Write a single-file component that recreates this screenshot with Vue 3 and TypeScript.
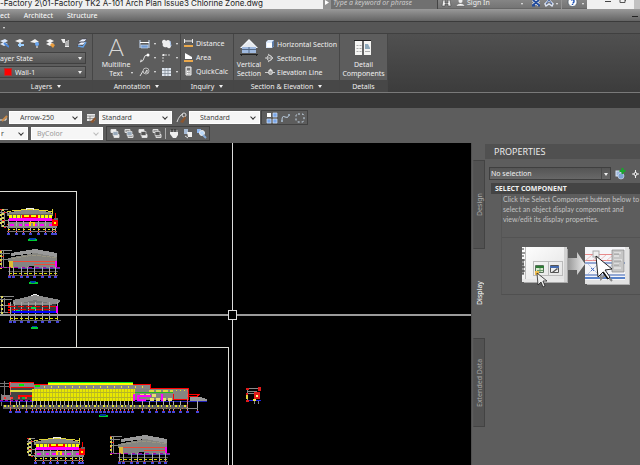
<script setup lang="ts">
import { ref } from 'vue'

interface Dot { x: number; y: number }

const layerState = ref('ayer State')
const layer = ref('Wall-1')
const leader = ref('Arrow-250')
const tableStyle = ref('Standard')
const mleaderStyle = ref('Standard')
const selection = ref('No selection')
const activeTab = ref('Display')

const menuTabs = ['ect', 'Architect', 'Structure']
const paletteTabs = ['Design', 'Display', 'Extended Data']

const footings: number[] = [8, 16, 23, 30, 38, 45, 52, 55]
const footingsWide: number[] = [9, 13, 21, 27, 34, 42, 49, 55]
const footingsLow: number[] = [10, 14, 21, 28, 35, 42, 49, 57]

const range = (from: number, to: number, step: number): number[] => {
  const out: number[] = []
  for (let v = from; v <= to; v += step) out.push(v)
  return out
}

const longFootings = [10, 16, 19, 26, ...range(32, 135, 4), 142, 149, 156, 163, 169, 173, 180, 187, 197]
const mullions = range(34, 134, 3)
const stripMarks = range(44, 148, 7)

const gableA: Dot[] = [{ x: 0, y: 0 }, { x: 27, y: 229 }]
const gableB: Dot[] = [{ x: 0, y: 0 }, { x: 110, y: 186 }]
</script>

<template>
  <div class="app">
    <header class="titlebar">
      <div class="doc-title">-Factory 2\01-Factory TK2 A-101 Arch Plan Issue3 Chlorine Zone.dwg</div>
      <div class="info">
        <button class="flat step" aria-label="Expand search"><svg width="8" height="9"><path d="M2 0L6 2.500L2 5z" fill="#fff" /></svg></button>
        <input class="search" type="text" aria-label="Search" placeholder="Type a keyword or phrase" />
        <button class="flat" aria-label="Find">
          <svg width="11" height="9"><path d="M2 0h2v3h3V0h2l1 6H7V4H4v2H1z" fill="#f2f2f2" stroke="#444" stroke-width=".6" /></svg>
        </button>
        <button class="flat sign">
          <svg width="11" height="9"><circle cx="5.500" cy="1" r="2" fill="#eee" /><path d="M1 6q1-2.500 4.500-2.500T10 6z" fill="#fff" stroke="#555" stroke-width=".5" /></svg>
          <span>Sign In</span>
          <i class="tri"></i>
        </button>
        <button class="flat" aria-label="Exchange">
          <svg width="10" height="9"><path d="M2 0l6 5M8 0L2 5" stroke="#e8ecf5" stroke-width="3" /><path d="M2 0l6 5M8 0L2 5M1 5.500h3m3 0h2" stroke="#234c9c" stroke-width="1.800" /></svg>
        </button>
        <button class="flat share" aria-label="Connect">
          <svg width="12" height="9"><path d="M6 0L2 4l1 2 3-2 3 2 1-2z" fill="none" stroke="#dde5f4" stroke-width="1.500" /><path d="M6 0L3 4m3-4l3 4" stroke="#4260a0" /></svg>
          <i class="tri"></i>
        </button>
        <button class="flat help" aria-label="Help">
          <svg width="11" height="9"><circle cx="5.500" cy="2" r="4.500" fill="#fff" stroke="#345" stroke-width=".6" /><path d="M4 0q3-1 3 1T5.500 3M5.500 4v1" fill="none" stroke="#1c50b4" stroke-width="1.400" /></svg>
          <i class="tri"></i>
        </button>
      </div>
      <div class="window-buttons">
        <button class="flat" aria-label="Minimize"><svg width="8" height="9"><path d="M1 1.500h6" stroke="#444" /></svg></button>
        <button class="flat" aria-label="Restore"><svg width="8" height="9"><path d="M1 0v2.500h5V0M6.500 0v1" fill="none" stroke="#555" /></svg></button>
        <button class="flat close" aria-label="Close"></button>
      </div>
    </header>

    <nav class="menu">
      <a v-for="t in menuTabs" :key="t" href="#">{{ t }}</a>
      <button class="flat collapse" aria-label="Minimize document"><svg width="6" height="12"><path d="M0 7.500h6" stroke="#222" stroke-width="1" /></svg></button>
    </nav>
    <div class="quick"><i class="tri"></i></div>

    <section class="ribbon">
      <div class="panel layers">
        <div class="panel-body">
          <div class="layer-icons">
            <svg width="9" height="10"><path d="M0 3l5-2 3 2-4 2zM0 6l4-2 4 2-4 2z" fill="#dce8fa" /><path d="M4 5l5 4" stroke="#4d8ade" stroke-width="2" /></svg>
            <svg width="10" height="10"><path d="M0 3l5-2 4 2-4 2z" fill="#eee" /><path d="M5 5v4M3 7h6" stroke="#9ccfff" stroke-width="2" /></svg>
            <svg width="10" height="10"><path d="M0 4l5-3 4 3-4 1z" fill="#eee" /><circle cx="7" cy="6" r="2" fill="#6daaf5" /><path d="M6 9h2" stroke="#fff" /></svg>
            <svg width="10" height="10"><path d="M0 3l4-2 4 2-4 2zM0 6l4-2 4 2-4 2z" fill="#f5f5f5" /><path d="M4 7l2-2 3 2-2 3z" fill="#e99c3c" /></svg>
            <svg width="10" height="10"><path d="M0 1h4v3l4-2v7H4V5H2z" fill="#eee" /><path d="M5 4v4M7 3v5" stroke="#777" /></svg>
            <svg width="11" height="10"><path d="M1 4l4-3h5L7 4zM0 7l4-3h5L6 7z" fill="#eef4ff" stroke="#334" stroke-width=".5" /><path d="M1 8l5 1 3-5" fill="none" stroke="#65a2e6" stroke-width="1.500" /></svg>
          </div>
          <span class="combo dark"><select v-model="layerState" aria-label="Layer state"><option>ayer State</option></select></span>
          <span class="combo dark swatch"><i></i><select v-model="layer" aria-label="Layer"><option>Wall-1</option></select></span>
        </div>
        <h2>Layers <i class="tri big"></i></h2>
      </div>

      <div class="panel annotation">
        <div class="panel-body row">
          <button class="flat large mtext"><span class="glyph">A</span><span>Multiline</span><span>Text</span><i class="tri"></i></button>
          <div class="annot-grid">
            <button class="flat" aria-label="Dimension"><svg width="12" height="10"><path d="M1 1v8M10 1v8" stroke="#c8dcf8" /><path d="M1 3.500h9" stroke="#fff" /><path d="M2 6h7v3H2z" fill="#739bd2" stroke="#cfe0f7" stroke-width=".6" /></svg><i class="tri"></i></button>
            <button class="flat" aria-label="Revision cloud"><svg width="12" height="10"><path d="M2 1q2-1 3 1 2-2 4 0 1 1 0 3 2 2 0 4-2 1-3-1-3 1-4-1Q1 6 2 5 0 3 2 1z" fill="#eee" /><path d="M9 2l1 5" stroke="#a9c6ed" /></svg><i class="tri"></i></button>
            <button class="flat" aria-label="Leader"><svg width="12" height="10"><path d="M1 9q4-1 4-4t4-3" fill="none" stroke="#ddd" /><path d="M1 9l1-3 1 2z" fill="#ddd" /><circle cx="9" cy="2" r="1.500" fill="#fff" /></svg><i class="tri"></i></button>
            <button class="flat" aria-label="Break"><svg width="12" height="10"><path d="M2 9V2h8" fill="none" stroke="#ccc" stroke-dasharray="2 1" /><path d="M1 2h3M2.500 1v2" stroke="#eee" /></svg><i class="tri"></i></button>
            <button class="flat" aria-label="Tag"><svg width="12" height="10"><circle cx="7" cy="4" r="3" fill="none" stroke="#bbb" /><path d="M1 9l3-5m2 2l2-3v3" fill="none" stroke="#ddd" /></svg><i class="tri"></i></button>
            <button class="flat" aria-label="Table"><svg width="12" height="10"><path d="M1 1h9v8H1z" fill="#dfe6ef" /><path d="M1 3.500h9M1 6.500h9M4 1v8M7 1v8" stroke="#78818c" stroke-width=".7" /></svg><i class="tri"></i></button>
          </div>
        </div>
        <h2>Annotation <i class="tri big"></i></h2>
      </div>

      <div class="panel inquiry">
        <div class="panel-body list">
          <button class="flat"><svg width="9" height="10"><path d="M0 3h9M.5 1v4M8.500 1v4" stroke="#eee" fill="none" /><path d="M0 8h9" stroke="#eaa84b" stroke-width="2" /></svg>Distance</button>
          <button class="flat"><svg width="9" height="10"><path d="M1 1l7 4v2H1z" fill="#fff" /><path d="M0 9h9" stroke="#eaa84b" stroke-width="2" /></svg>Area</button>
          <button class="flat"><svg width="9" height="10"><path d="M2 1h5v8H2z" fill="#aaa" stroke="#eee" /><path d="M3 3h3" stroke="#444" /><path d="M3 5.500h3M3 7.500h3" stroke="#fff" stroke-dasharray="1 .500" /></svg>QuickCalc</button>
        </div>
        <h2>Inquiry <i class="tri big"></i></h2>
      </div>

      <div class="panel section">
        <div class="panel-body row">
          <button class="flat large">
            <svg width="18" height="20"><path d="M0 11L9 2l9 9z" fill="#f4f7fa" /><path d="M2 10h14v6H2z" fill="#9fb9df" /><path d="M2 10L9 4l7 6z" fill="#e5e9ee" /><path d="M9 10v6M2 12.500h14" stroke="#536986" /><path d="M0 17.500h18M1.500 17v2m15-2v2" stroke="#222" /></svg>
            <span>Vertical</span><span>Section</span>
          </button>
          <div class="list">
            <button class="flat"><svg width="10" height="10"><path d="M1 3l2-2h6v6L7 9H1z" fill="#dce9fb" /><path d="M2 4h5v4H2z" fill="#fff" /><path d="M7 3l2-2v6L7 9z" fill="#5d7da9" /></svg>Horizontal Section</button>
            <button class="flat"><svg width="10" height="10"><circle cx="4.500" cy="5" r="2.500" fill="none" stroke="#ccc" /><path d="M0 5h6M3 1l5 4-5 4" fill="none" stroke="#ccc" /></svg>Section Line</button>
            <button class="flat"><svg width="10" height="10"><path d="M0 5.500h10" stroke="#ccc" /><circle cx="5.500" cy="5.500" r="2" fill="#aaa" stroke="#ddd" /><path d="M3 4l2.500-2.500L8 4z" fill="#ddd" /></svg>Elevation Line</button>
          </div>
        </div>
        <h2>Section &amp; Elevation <i class="tri big"></i></h2>
      </div>

      <div class="panel details">
        <div class="panel-body row">
          <button class="flat large">
            <svg width="18" height="20"><path d="M1 4h7.500v14H1zM9.500 4H17v14H9.500z" fill="#f5f5f3" /><path d="M0 3.500h17M9 4v14" stroke="#222" /><path d="M2.500 8.500h2m1 0h2m-5 3h2m1 0h2m-5 3h2m1 0h2m3.500 0h5" stroke="#999" stroke-width=".8" /><path d="M11 7h3l2 4v1h-5z" fill="#8fa9bb" /></svg>
            <span>Detail</span><span>Components</span>
          </button>
        </div>
        <h2>Details</h2>
      </div>
    </section>
    <div class="band"></div>

    <section class="toolbars">
      <div class="bar">
        <svg class="lead" width="9" height="12"><path d="M0 8h6V5" fill="none" stroke="#eee" /><path d="M2 9l5-5" stroke="#c98b4b" stroke-width="2" /></svg>
        <span class="combo light first"><select v-model="leader" aria-label="Dimension style"><option>Arrow-250</option></select></span>
        <svg width="12" height="12"><path d="M1 2h8v7H1z" fill="#e8e8e8" /><path d="M1 4h8M4 4v5M1 6.500h8" stroke="#666" stroke-width=".6" /><path d="M4 10l5-5 1 2-3 4z" fill="#8b5630" /></svg>
        <span class="combo light"><select v-model="tableStyle" aria-label="Table style"><option>Standard</option></select></span>
        <svg width="12" height="12"><path d="M1 10q1-4 4-7l2-1" fill="none" stroke="#ddd" /><circle cx="8" cy="3" r="2" fill="none" stroke="#ddd" /><path d="M4 10l5-6 1 2-3 5z" fill="#8b5630" /></svg>
        <span class="combo light inset"><select v-model="mleaderStyle" aria-label="Multileader style"><option>Standard</option></select></span>
        <div class="group">
          <button class="flat" aria-label="Blocks"><svg width="12" height="12"><path d="M1 1h4v4H1z" fill="#fff" /><path d="M7 1h4v4H7zM1 7h4v4H1zM7 7h4v4H7z" fill="#7aa7ea" stroke="#cfe1fb" stroke-width=".7" /></svg></button>
          <button class="flat" aria-label="Spline"><svg width="12" height="12"><path d="M2 8q0-5 3-3t4-2" fill="none" stroke="#bcd" /><path d="M1 8h2v2H1zM8 2h2v2H8z" fill="#9ab" /></svg></button>
          <button class="flat" aria-label="Boundary"><svg width="12" height="12"><rect x="2" y="2" width="8" height="8" rx="2" fill="none" stroke="#cde" stroke-dasharray="2 2" /></svg></button>
        </div>
      </div>
      <div class="bar">
        <span class="combo light tiny"><select aria-label="Line color"><option>r</option></select></span>
        <span class="combo light color"><select aria-label="Plot style" disabled><option>ByColor</option></select></span>
        <div class="group order">
          <button v-for="n in 4" :key="n" class="flat" aria-label="Draw order">
            <svg width="10" height="11"><path d="M1 1.500h5v3H1zM4 6.500h5v3H4z" :fill="n % 2 ? '#eee' : '#999'" stroke="#ddd" /><path d="M3 3.500h5v4H3z" :fill="n > 2 ? '#555' : '#9ab'" stroke="#eee" stroke-width=".6" /></svg>
          </button>
          <i class="sep"></i>
          <button class="flat" aria-label="Hatch to back"><svg width="10" height="11"><path d="M1 2h8v5l-2 3H4L1 6z" fill="#eee" /><path d="M1 3h8M3 1v3M6 1v3" stroke="#222" /></svg></button>
          <button class="flat" aria-label="Annotations to front"><svg width="10" height="11"><path d="M1 1h4v5H1z" fill="#a8bbd4" /><path d="M4 4h5v5H5z" fill="#f0f0f0" /><path d="M2 8l3 2" stroke="#ddd" /></svg></button>
          <button class="flat" aria-label="Isolate"><svg width="10" height="11"><path d="M0 1h4v4H0z" fill="#8eb6ee" /><circle cx="5" cy="5" r="2.500" fill="#bcd9fa" stroke="#eee" /><path d="M6 7l3 3" stroke="#87acd8" stroke-width="2" /></svg></button>
        </div>
      </div>
    </section>

    <main class="workspace">
      <div class="canvas">
        <svg width="100%" height="100%" shape-rendering="crispEdges" aria-label="Drawing area">
          <g transform="translate(0 -143)">
            <path d="M0 191.500h76.500V347M0 347.500h228.500V600" fill="none" stroke="#deded8" />

            <g v-for="(p, i) in gableA" :key="'a' + i" :transform="`translate(${p.x} ${p.y})`">
              <path d="M0 209.500h8M0 212.500h8M0 220.500h9M1 226.500h8M1.500 210v17M4.500 211v14" stroke="#888" fill="none" />
              <path d="M3 209v19M1 214v12" stroke="#dcd75e" stroke-width="2" stroke-dasharray="2 2" />
              <path d="M0 209.500h2m2 3h2m-4 8h3m2 4h2m-5 3h2" stroke="#e22" />
              <path d="M7 213L30 208l23 5v3H7z" fill="#8a8a86" />
              <path d="M7 211.500L30 209 53 211.500M52.500 209v5" fill="none" stroke="#dfd63a" />
              <path d="M26.500 210v-1.500h7v1.500" fill="none" stroke="#eee" />
              <path d="M9 214h43v4H9z" fill="#665" />
              <path d="M9 216.500h43" stroke="#ff0" stroke-width="3" stroke-dasharray="3 1" />
              <path d="M22 215h16v3H22z" fill="#f00" /><path d="M24 215h5v2h-5zM31 215h5v2h-5z" fill="#ff0" />
              <path d="M9 222h43v4H9z" fill="#85858a" />
              <path v-for="x in footings" :key="x" :d="`M${x + .5} 219v14`" stroke="#aaa" />
              <path d="M9 218h43v3H9z" fill="#f0f" />
              <path d="M10 225h42" stroke="#f0f" stroke-dasharray="4 5 3 3" stroke-width="2" />
              <path d="M29 222h6v4h-6z" fill="#ffd000" /><path d="M31 223h2v3h-2z" fill="#888" />
              <path d="M7 226h50v2H7z" fill="#888" />
              <path d="M52 219h3v-6h1v7h2v6h-6z" fill="#f00" /><path d="M54 222h2v2h-2z" fill="#ff0" /><path d="M54 218h4v2h-4z" fill="#666" />
              <path d="M8 229.500h48" stroke="#ee0" stroke-dasharray="2 3" /><path d="M7 231.500h50" stroke="#777" />
              <path v-for="x in footings" :key="x" :d="`M${x} 231.500h1`" stroke="#f00" />
              <path v-for="x in footings" :key="x" :d="`M${x - 1} 233h3v2h-3z`" fill="#4646d8" />
              <path d="M28 239h9v2h-9z" fill="#0c3" /><path d="M29 238h7v1h-7zM30 239h5v1h-5z" fill="#04a" />
            </g>

            <g v-for="(p, i) in gableB" :key="'b' + i" :transform="`translate(${p.x} ${p.y})`">
              <path d="M0 250.500h12M0 253.500h10M0 259.500h9M0 267.500h9M1.500 251v16M3.500 250v18" stroke="#888" fill="none" />
              <path d="M1 251v18" stroke="#ddcc3c" stroke-width="2" stroke-dasharray="2 2" /><path d="M0 250.500h1m1 6h2m-4 5h1m1 6h2" stroke="#e22" />
              <path d="M11 253L35 249l22 4v4L35 253 11 256z" fill="#999" />
              <path d="M8 258L35 253l22 4v5H8z" fill="#858580" />
              <path d="M12 258.500L35 255l22 3" fill="none" stroke="#9a9583" stroke-dasharray="4 1" />
              <path d="M9 260h48v8H9z" fill="#848484" />
              <path d="M12 261.500h44M34 264.500h21" stroke="#ee4936" />
              <path d="M55 261h2v7h-2z" fill="#f0f" /><path d="M9 261h4v7H9z" fill="#ddbc38" />
              <path d="M29 266h5v3h-5z" fill="#000" /><path d="M0 267.500h60" stroke="#a0a" stroke-dasharray="4 3" /><path d="M18 268.500h42" stroke="#4343a8" />
              <path d="M9 273.500h48" stroke="#dd0" stroke-dasharray="3 2" /><path d="M8 275.500h50M8 271.500h50" stroke="#555" />
              <path v-for="x in footingsWide" :key="x" :d="`M${x + .5} 267v9`" stroke="#aaa" />
              <path v-for="x in footingsWide" :key="x" :d="`M${x} 275.500h1`" stroke="#f33" />
              <path v-for="x in footingsWide" :key="x" :d="`M${x - 1} 276h3v2h-3z`" fill="#4646d8" />
              <path d="M29 282h9v2h-9z" fill="#0c3" /><path d="M30 281h6v1h-6zM31 282h4v1h-4z" fill="#04a" />
            </g>

            <g>
              <path d="M0 296.500h14M0 299.500h12M0 305.500h10M0 312.500h10M1.500 296v17M4.500 298v14" stroke="#888" fill="none" />
              <path d="M2 296v20" stroke="#dcd75e" stroke-width="2" stroke-dasharray="2 2" /><path d="M9 303v10" stroke="#f00" stroke-dasharray="2 1" stroke-width="2" />
              <path d="M13 300L35 295l25 5v2l-3 2H13z" fill="#8c8c8c" /><path d="M31 296q4-3 8 0" fill="none" stroke="#eee" />
              <path d="M10 303.500h46v9H10z" fill="#383838" />
              <path d="M22 303l13-3 14 3z" fill="#777" />
              <path d="M14 304.500h38" stroke="#888" />
              <path v-for="x in footingsLow" :key="x" :d="`M${x + .5} 302v19`" stroke="#aaa" />
              <path d="M10 306h46M12 309h40" stroke="#e00" stroke-width="1" stroke-dasharray="6 2" />
              <path d="M31 307h5v2h-5zM16 310h4v2h-4z" fill="#0d5" />
              <path d="M12 312h44" stroke="#00f" stroke-width="2" /><path d="M56 306h2v7h-2z" fill="#f0f" />
              <path d="M10 318.500h50" stroke="#dd0" stroke-dasharray="3 2" /><path d="M9 320.500h52" stroke="#666" />
              <path v-for="x in footingsLow" :key="x" :d="`M${x - 1} 321h3v2h-3z`" fill="#4646d8" />
              <path d="M31 327h7v2h-7z" fill="#0c3" /><path d="M32 326h5v1h-5z" fill="#04a" />
            </g>

            <g>
              <path d="M0 383.500h10M0 386.500h10M4.500 381v18M1.500 394v12" stroke="#777" />
              <path d="M2 395h8v5H2zM10 383h24v4H10z" fill="#8a8084" /><path d="M9 382.500h25M9 387.500h25M9.500 382v6" stroke="#f00" fill="none" />
              <path d="M19 384h5v2h-5z" fill="#0e0" />
              <path d="M10 388h24v12H10z" fill="#444" /><path d="M10 391h22" stroke="#dd4" stroke-width="2" />
              <path d="M18 396h16" stroke="#f00" stroke-width="2" /><path d="M4 398h30" stroke="#f33" stroke-dasharray="2 5" stroke-width="2" /><path d="M22 397h3v2h-3z" fill="#0b4" />
              <path d="M0 400.500h34" stroke="#a0a" stroke-dasharray="3 2" />
              <path d="M34 384h116v5H34z" fill="#888" /><path d="M34 384.500h14M133 384.500h18M150.500 384v5" stroke="#f00" fill="none" />
              <path d="M35 385h5v2h-5z" fill="#0e0" />
              <path d="M48 382.500h85" stroke="#0e2" /><path d="M48 384h85" stroke="#ff0" stroke-width="2" />
              <path v-for="x in stripMarks" :key="x" :d="`M${x} 386h1v2h-1z`" fill="#e9e33b" />
              <path d="M32 389h103v12H32z" fill="#e9e900" />
              <path v-for="x in mullions" :key="x" :d="`M${x + .5} 389v12`" stroke="#c2c21c" />
              <path d="M32 392.500h103M32 397.500h103" stroke="#b5b526" />
              <path d="M135 389h54v11h-54z" fill="#858580" /><path d="M150 388.500h39M188.500 388v12M173 399.500h16M173.500 394v6" stroke="#f00" fill="none" />
              <path d="M135 392.500h38" stroke="#2b2" /><path d="M149 391h24" stroke="#ded943" stroke-width="2" stroke-dasharray="5 2" />
              <path d="M172 390.500h13" stroke="#e4df2c" stroke-dasharray="1 3" />
              <path d="M140 395.500h18M150 399.500h22" stroke="#eadf6c" stroke-width="3" stroke-dasharray="4 2" />
              <path d="M134 394v7m4-6v6m24-7v7m-23-5h12m-13 4h8" stroke="#f0f" stroke-width="2" />
              <path d="M187 394.500h12l-2 2h-9" fill="none" stroke="#f00" /><path d="M190 397h10l7 2v2h-17z" fill="#999" />
              <path d="M0 401.500h34M135 401.500h72" stroke="#22b" />
              <path v-for="x in longFootings" :key="x" :d="`M${x + .5} 401v10`" stroke="#b0b0b0" />
              <path d="M3 405h184v4H3z" fill="#5f5f5f" />
              <path d="M4 406h183" stroke="#e0e033" stroke-width="2" stroke-dasharray="2 2 1 4" /><path d="M10 408.500h178" stroke="#c74" stroke-dasharray="1 3" />
              <path d="M187 408.500h11" stroke="#888" />
              <path v-for="x in longFootings" :key="x" :d="`M${x} 410.500h1`" stroke="#f33" />
              <path v-for="x in longFootings" :key="x" :d="`M${x - 1} 411h3v2h-3z`" fill="#4646d8" />
              <path d="M10.500 382v30M187.500 389v20" stroke="#d66" stroke-dasharray="3 2" />
              <path d="M99 415h9v2h-9z" fill="#0c3" /><path d="M100 414h6v2h-6z" fill="#039" />
            </g>

            <g>
              <path d="M247 388.500h13M247 391.500h10M247 393.500h10M247.500 388v13M254.500 400v4m4-4v4" stroke="#888" fill="none" />
              <path d="M246 388h3v2h-3zM246 400h3v2h-3zM246 393h2v2h-2zM258 387h3v4h-3zM254 392h6v7h-6z" fill="#e21919" />
              <path d="M247 395v4" stroke="#ddd33d" stroke-width="2" /><path d="M256 395h2v2h-2z" fill="#ff8" />
              <path d="M249 400.500h12" stroke="#22e" /><path d="M253 400h3" stroke="#ee4" stroke-width="2" />
            </g>

            <path d="M0 315h228M237 315h1000" stroke="#9b9b9b" stroke-width="2" />
            <path d="M232.500 0v310M232.500 320v800" stroke="#dcdcdc" />
            <rect x="228.500" y="310.500" width="8" height="9" fill="none" stroke="#ddd" />
          </g>
        </svg>
      </div>

      <aside class="palette">
        <div class="side-tabs" role="tablist">
          <button v-for="t in paletteTabs" :key="t" role="tab" class="side-tab" :class="{ active: t === activeTab }" :aria-selected="t === activeTab" @click="activeTab = t">{{ t }}</button>
        </div>
        <div class="palette-body">
          <h1>PROPERTIES</h1>
          <div class="picker">
            <span class="combo prop"><select v-model="selection" aria-label="Selected object"><option>No selection</option></select></span>
            <button class="flat" aria-label="Add to selection"><svg width="11" height="12"><rect x="1" y="3" width="5" height="5" fill="#9db9dd" stroke="#dce8f8" /><circle cx="6" cy="8" r="3" fill="#7fa3d2" stroke="#d8e5f5" stroke-width=".6" /><path d="M7.500 0v6M4.500 3h6" stroke="#17a82b" stroke-width="2" /></svg></button>
            <button class="flat" aria-label="Pick"><svg width="11" height="12"><path d="M5.500 2v8M2 6h7" stroke="#eee" /><circle cx="5.500" cy="6" r="1.500" fill="#555" stroke="#fff" /></svg></button>
          </div>
          <h3>SELECT COMPONENT</h3>
          <div class="component">
            <p>Click the Select Component button below to<br />select an object display component and<br />view/edit its display properties.</p>
            <button class="flat picture" aria-label="Select Component">
              <svg width="110" height="42" viewBox="0 0 110 42">
                <defs>
                  <linearGradient id="card" x2="1" y2="1"><stop stop-color="#fff" /><stop offset="1" stop-color="#e3e3e3" /></linearGradient>
                  <linearGradient id="arrow"><stop stop-color="#999" /><stop offset="1" stop-color="#eee" /></linearGradient>
                </defs>
                <path d="M2 2h44v34H2z" fill="#aaa" /><path d="M0 0h45v35H0z" fill="#d2d2d2" /><path d="M0 0h42v32H0z" fill="url(#card)" />
                <path d="M0 32h42v3H0z" fill="#e8e8e8" />
                <path d="M3.500 0v32M11 14.500h29M11.500 14v14M26.500 14v14M40.500 14v14M11 28.500h30" stroke="#bbb" fill="none" />
                <path d="M0 2h2m-2 4h3m-3 3h2m-2 4h3m-3 4h2m-2 3h3m-3 4h3m-3 3h2M1 12v15" stroke="#333" stroke-width="1" />
                <path d="M13.500 18.500h8v7h-8z" fill="#d9e9cf" stroke="#56705a" /><path d="M14 19h8v2h-8z" fill="#2e7c36" /><path d="M15 23.500h6M18 21v4" stroke="#6d9d6d" /><path d="M13 24h4v4h-4z" fill="#efbd4e" />
                <path d="M28.500 18.500h8v7h-8z" fill="#eee" stroke="#555" /><path d="M28 19h9v2h-9z" fill="#456baf" /><path d="M30 25l5-4 1 1-4 3z" fill="#555" />
                <path d="M15 26l1 12 3-3 2 5 2-1-2-5h4z" fill="#eee" stroke="#222" stroke-width=".8" />
                <path d="M46 11h9V5l8 12-8 11v-5h-9z" fill="url(#arrow)" />
                <path d="M65 2h43v36H65z" fill="#b0b0b0" /><path d="M63 0h44v37H63z" fill="#e2e2e2" /><path d="M63 0h40v33H63z" fill="#f5f5f8" />
                <path d="M63 7.500h28M63 13.500h28" stroke="#e88a8a" /><path d="M63 14l7-6m0 6l7-6m0 6l7-6m0 6l7-6" stroke="#e9a8a8" stroke-width=".7" />
                <path d="M63 16h40M63 28h40" stroke="#93a8d4" stroke-width="2" /><path d="M63 31h40" stroke="#245dbb" stroke-width="1.500" />
                <path d="M66 27l10-10m4 11l10-10M66 17l10 10" stroke="#bdcae5" /><path d="M69 21l3 3m0-3l-3 3" stroke="#4f73c0" />
                <rect x="71" y="4" width="6" height="6" fill="#eee" stroke="#aaa" />
                <path d="M90 3h12v22H90z" fill="#c6c6c6" stroke="#888" stroke-width=".7" /><path d="M92 6h7m-7 3h5m-5 4h8m-8 4h5m-5 4h7" stroke="#f5f5f5" /><path d="M92 7h5m-5 7h7m-7 4h5" stroke="#777" stroke-width=".6" />
                <path d="M76 11l3 21 5-5 6 7" fill="none" stroke="#888" stroke-width="2" />
                <path d="M74 9l2 21 5-5 5 7 2-2-5-7 7-1z" fill="#fff" stroke="#111" stroke-width=".9" /><path d="M81 25l5 7" stroke="#111" stroke-width="1.500" />
              </svg>
            </button>
          </div>
        </div>
      </aside>
    </main>
  </div>
</template>

<style>
body { margin: 0; overflow: hidden; }
</style>

<style scoped>
* { box-sizing: border-box; }
.app { display: flex; flex-direction: column; height: 100vh; min-height: 400px; overflow: hidden; background: #5d5d5d; color: #f0f0f0; font: 7px/9px "Noto Sans", "Open Sans", sans-serif; }
button, select, input { font: inherit; color: inherit; margin: 0; padding: 0; }
h1, h2, h3, p { margin: 0; font: inherit; }
svg { display: block; flex: none; }
.flat { display: flex; align-items: center; border: 0; background: none; text-align: left; white-space: nowrap; }
.tri { display: block; flex: none; width: 0; height: 0; border: 1px solid transparent; border-top: 2px solid #f2f2f2; border-bottom: 0; }
.tri.big { border-width: 3px 2px 0; }

.titlebar { display: flex; flex: none; height: 9px; overflow: hidden; background: #f0f0f0; }
.doc-title { flex: none; width: 323px; height: 9px; padding-bottom: 2px; display: flex; align-items: center; color: #222; font: 8px/9px Inter, sans-serif; white-space: nowrap; }
.info { display: flex; flex: 1; align-items: center; background: linear-gradient(#858585, #747474); border-bottom: 1px solid #666; }
.info .flat, .window-buttons .flat { height: 9px; }
.step { width: 8px; background: #929292; }
.search { width: 107px; height: 9px; margin-right: 3px; border: 0; border-right: 1px solid #444; background: #707070; padding: 0 2px 3px; font-style: italic; line-height: 6px; }
.search::placeholder { color: #ccc; opacity: 1; }
.sign { width: 68px; margin: 0 8px 0 3px; gap: 1px; }
.sign span { padding-bottom: 3px; }
.sign .tri { margin-left: auto; }
.share { gap: 1px; margin-left: 2px; }
.help { gap: 4px; margin-left: auto; margin-right: 3px; padding-left: 5px; border-left: 1px solid #949494; }
.window-buttons { display: flex; width: 53px; gap: 7px; padding-left: 17px; }
.close { flex: 1; background: #c2c2c2; }

.menu { display: flex; flex: none; align-items: center; gap: 14px; height: 13px; background: linear-gradient(#999, #646464); border-bottom: 1px solid #3b3b3b; }
.menu a { color: #fff; text-decoration: none; }
.collapse { margin-left: auto; margin-right: 2px; }
.quick { flex: none; height: 12px; padding: 5px 3px; background: #565656; border-bottom: 1px solid #404040; }

.ribbon { display: flex; flex: none; height: 59px; background: linear-gradient(#505050, #3c3c3c); border-bottom: 1px solid #7a7a7a; }
.panel { display: flex; flex-direction: column; background: #5d5d5d; border-right: 1px solid #464646; }
.panel-body { flex: 1; min-height: 0; padding-top: 2px; }
.row { display: flex; }
.panel h2 { display: flex; flex: none; align-items: center; justify-content: center; gap: 5px; height: 12px; background: #474747; white-space: nowrap; }
.layers { width: 93px; }
.annotation { width: 88px; }
.inquiry { width: 53px; }
.section { width: 106px; }
.details { width: 48px; }
.layer-icons { display: flex; justify-content: space-between; width: 88px; height: 14px; padding-top: 2px; }
.combo { position: relative; display: block; }
.combo select { display: block; width: 100%; height: 100%; appearance: none; border: 0; border-radius: 0; background: none; opacity: 1; }
.combo::after { content: ""; position: absolute; right: 3px; top: 50%; margin-top: -1px; border: 2px solid transparent; border-top: 3px solid #eee; border-bottom: 0; pointer-events: none; }
.combo.dark { width: 86px; height: 12px; margin-top: 2px; background: linear-gradient(#6a6a6a, #555); border: 1px solid #404040; border-left: 0; }
.swatch { display: flex; align-items: center; padding-left: 4px; gap: 3px; }
.swatch i { flex: none; width: 8px; height: 8px; background: #f00; border: 1px solid #a33; }

.large { flex-direction: column; align-items: center; text-align: center; height: 44px; padding-top: 1px; position: relative; }
.large > svg, .glyph { margin-bottom: 3px; }
.large > span:not(.glyph) { line-height: 9px; }
.mtext { width: 46px; }
.glyph { height: 20px; color: #d8d8d8; font: 300 24px/20px Lato, sans-serif; }
.mtext .tri { position: absolute; right: 6px; bottom: 6px; }
.annot-grid { display: grid; grid-template-columns: 22px 18px; grid-auto-rows: 14px; }
.annot-grid .flat { gap: 3px; }
.list .flat { height: 14px; gap: 3px; }
.inquiry .list { padding-left: 3px; }
.section .large { width: 30px; }
.section .list .flat { gap: 2px; }
.section .list { padding-left: 1px; }
.details .row { justify-content: center; }
.annot-grid, .section .list .flat:first-child { margin-top: 1px; }

.band { flex: none; height: 15px; background: #373737; }
.toolbars { display: flex; flex: none; flex-direction: column; gap: 1px; height: 35px; padding-top: 2px; background: #5d5d5d; }
.bar { display: flex; align-items: center; height: 15px; }
.combo.light { width: 73px; height: 13px; margin-right: 4px; background: #f6f6f6; color: #444; border: 1px solid #fff; }
.combo.light select { padding-left: 2px; }
.combo.light::after { right: 4px; width: 4px; height: 4px; margin-top: -3px; box-sizing: border-box; border: solid #333; border-width: 0 1px 1px 0; transform: rotate(45deg); }
.bar > svg:not(.lead) { margin-right: 1px; }
.combo.light.first select, .combo.light.inset select { padding-left: 10px; }
.combo.light.inset { width: 71px; margin-right: 1px; }
.combo.light.tiny { width: 28px; margin-right: 3px; }
.combo.light.tiny select { padding-left: 0; }
.combo.light.color { width: 72px; margin-right: 3px; color: #999; }
.combo.light.color select { padding-left: 5px; color: #999; }
.combo.light.color::after { border-color: #bbb; }
.group { display: flex; align-items: center; gap: 2px; height: 15px; padding: 0 1px 0 4px; border: 1px solid #424242; }
.group.order { gap: 4px; padding: 0 2px 0 3px; }
.sep { width: 1px; height: 11px; margin: 0 -1px; background: #aaa; }

.workspace { display: flex; flex: 1; min-height: 0; }
.canvas { flex: 1; min-width: 0; overflow: hidden; background: #000; }
.palette { display: flex; flex: none; width: 169px; padding-left: 1px; border-left: 1px solid #505050; background: #5d5d5d; }
.side-tabs { display: flex; flex: none; flex-direction: column; width: 12px; padding-top: 17px; }
.side-tab { height: 89px; border: 1px solid #434343; border-right-color: #545454; background: #525252; color: #aaa; writing-mode: vertical-rl; transform: rotate(180deg); text-align: center; line-height: 9px; border-radius: 0; }
.side-tab.active { border-color: transparent; background: none; color: #fff; }
.palette-body { flex: 1; min-width: 0; padding-top: 1px; }
h1 { height: 15px; padding-left: 9px; background: #505050; font: 9px/16px "Open Sans", sans-serif; }
.picker { display: flex; align-items: center; gap: 4px; height: 13px; margin: 8px 0 3px 4px; }
.combo.prop { width: 122px; height: 13px; flex: none; border: 1px solid #3f3f3f; background: linear-gradient(#555, #686868); }
.combo.prop::before { content: ""; position: absolute; right: 8px; top: 0; bottom: 0; border-left: 1px solid #4a4a4a; }
.combo.prop::after { right: 2px; }
.combo.prop select { padding-left: 1px; }
h3 { height: 11px; margin-left: 6px; padding-left: 4px; background: #444; font-weight: 700; line-height: 11px; }
.component { margin-left: 16px; border-left: 1px solid #555; border-bottom: 1px solid #505050; }
.component p { height: 44px; padding-left: 1px; color: #c2c2c2; font-family: Lato, sans-serif; line-height: 10px; border-bottom: 1px solid #535353; overflow: hidden; white-space: nowrap; }
.picture { padding: 9px 0 5px 20px; }
</style>
